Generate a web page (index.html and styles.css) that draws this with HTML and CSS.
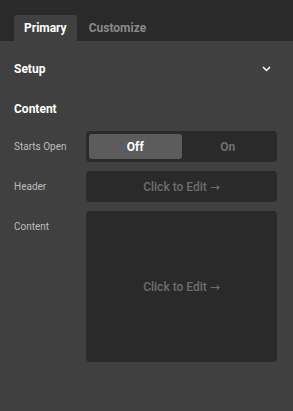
FILE: index.html
```html
<!DOCTYPE html>
<html lang="en">
<head>
    <meta charset="UTF-8">
    <meta name="viewport" content="width=device-width, initial-scale=1.0">
    <title>Accordion Settings</title>
    <link rel="stylesheet" href="styles.css">
</head>
<body>
    <div class="tabs">
        <div class="tab active">Primary</div>
        <div class="tab">Customize</div>
    </div>
    <div class="panel">
        <div class="group-head">
            <span>Setup</span>
            <svg class="chevron" width="9" height="6" viewBox="0 0 9 6">
                <path d="M1 1 L4.5 4.5 L8 1" fill="none" stroke="#fff" stroke-width="1.5"/>
            </svg>
        </div>
        <div class="group-title">Content</div>
        <div class="row">
            <div class="label">Starts Open</div>
            <div class="control toggle">
                <div class="seg on">Off</div>
                <div class="seg">On</div>
            </div>
        </div>
        <div class="row">
            <div class="label">Header</div>
            <div class="control edit">Click to Edit <span class="arrow">&rarr;</span></div>
        </div>
        <div class="row">
            <div class="label">Content</div>
            <div class="control edit tall">Click to Edit <span class="arrow">&rarr;</span></div>
        </div>
    </div>
</body>
</html>
```
FILE: styles.css
```css
body {
    margin: 0;
    background-color: #404040;
    font-family: Roboto, "Liberation Sans", sans-serif;
    color: #fff;
}
.tabs {
    display: flex;
    gap: 2px;
    background-color: #2a2a2a;
    height: 41px;
    padding: 15px 14px 0;
    box-sizing: border-box;
    align-items: flex-end;
}
.tab {
    height: 26px;
    line-height: 26px;
    padding: 0 10px;
    border-radius: 3px 3px 0 0;
    font-size: 12px;
    font-weight: 700;
    color: #8a8a8a;
}
.tab.active {
    background-color: #404040;
    color: #fff;
}
.panel {
    padding: 14px 16px 0 14px;
}
.group-head {
    display: flex;
    justify-content: space-between;
    align-items: center;
    height: 28px;
    font-size: 12px;
    font-weight: 700;
}
.chevron {
    margin-right: 6px;
}
.group-title {
    height: 28px;
    line-height: 28px;
    margin-top: 12px;
    font-size: 12px;
    font-weight: 700;
}
.row {
    display: flex;
    margin-top: 8px;
}
.label {
    width: 72px;
    line-height: 31px;
    font-size: 10px;
    color: #bdbdbd;
}
.control {
    flex: 1;
    height: 31px;
    background-color: #2a2a2a;
    border-radius: 4px;
    box-sizing: border-box;
}
.row + .row {
    margin-top: 9px;
}
.toggle {
    display: flex;
    padding: 3px;
}
.seg {
    flex: 1;
    display: flex;
    justify-content: center;
    align-items: center;
    border-radius: 3px;
    font-size: 12px;
    font-weight: 700;
    color: #6e6e6e;
}
.seg.on {
    background-color: #5c5c5c;
    color: #fff;
}
.edit {
    display: flex;
    justify-content: center;
    align-items: center;
    gap: 3px;
    font-size: 12px;
    font-weight: 500;
    color: #6e6e6e;
}
.arrow {
    font-family: "DejaVu Sans", sans-serif;
    font-weight: 400;
}
.tall {
    height: 151px;
}
```
